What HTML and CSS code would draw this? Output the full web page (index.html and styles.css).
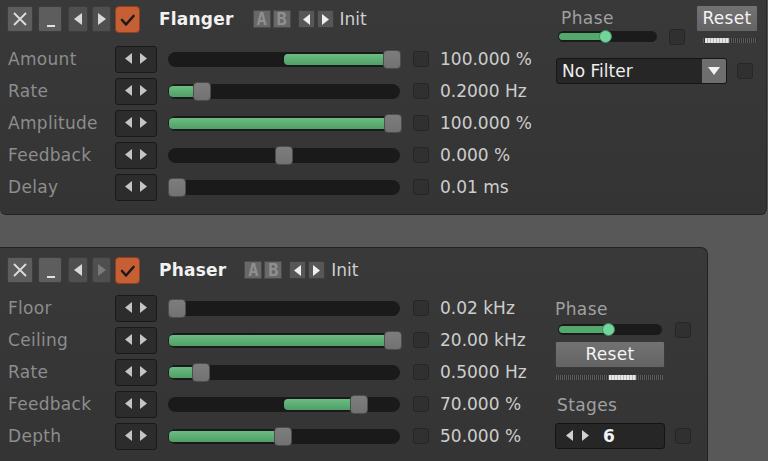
FILE: index.html
```html
<!DOCTYPE html>
<html>
<head>
<meta charset="utf-8">
<link rel="stylesheet" href="styles.css">
</head>
<body>
<div class="panel panel-top">
  <div class="main">
    <div class="header">
      <div class="hbtn hb-x"><svg width="26" height="26" viewBox="0 0 26 26"><path d="M6.5 6.5 L19.5 19.5 M19.5 6.5 L6.5 19.5"/></svg></div>
      <div class="hbtn hb-min"><span class="underscore"></span></div>
      <div class="hbtn hb-arr"><svg width="8" height="12" viewBox="0 0 8 12"><polygon points="8,0 8,12 0,6"/></svg></div>
      <div class="hbtn hb-arr"><svg width="8" height="12" viewBox="0 0 8 12"><polygon points="0,0 0,12 8,6"/></svg></div>
      <div class="hb-on"><svg width="25" height="27" viewBox="0 0 25 27"><polyline points="7,14 11,18.5 18.5,10"/></svg></div>
      <div class="title">Flanger</div>
      <div class="ab">A</div><div class="ab">B</div>
      <div class="sarr sarr-first"><svg width="7" height="11" viewBox="0 0 7 11"><polygon points="7,0 7,11 0,5.5"/></svg></div>
      <div class="sarr"><svg width="7" height="11" viewBox="0 0 7 11"><polygon points="0,0 0,11 7,5.5"/></svg></div>
      <div class="init">Init</div>
    </div>
    <div class="rows">
      <div class="row"><div class="label">Amount</div><div class="spin"><svg width="30" height="12" viewBox="0 0 30 12"><polygon points="11,0 11,11 4,5.5"/><polygon points="19,0 19,11 26,5.5"/></svg></div><div class="slider"><div class="fill" style="left:116px;width:106px"></div><div class="handle" style="left:215px"></div></div><div class="chk"></div><div class="value">100.000 %</div></div>
      <div class="row"><div class="label">Rate</div><div class="spin"><svg width="30" height="12" viewBox="0 0 30 12"><polygon points="11,0 11,11 4,5.5"/><polygon points="19,0 19,11 26,5.5"/></svg></div><div class="slider"><div class="fill" style="left:1px;width:28px"></div><div class="handle" style="left:25px"></div></div><div class="chk"></div><div class="value">0.2000 Hz</div></div>
      <div class="row"><div class="label">Amplitude</div><div class="spin"><svg width="30" height="12" viewBox="0 0 30 12"><polygon points="11,0 11,11 4,5.5"/><polygon points="19,0 19,11 26,5.5"/></svg></div><div class="slider"><div class="fill" style="left:1px;width:222px"></div><div class="handle" style="left:216px"></div></div><div class="chk"></div><div class="value">100.000 %</div></div>
      <div class="row"><div class="label">Feedback</div><div class="spin"><svg width="30" height="12" viewBox="0 0 30 12"><polygon points="11,0 11,11 4,5.5"/><polygon points="19,0 19,11 26,5.5"/></svg></div><div class="slider"><div class="handle" style="left:107px"></div></div><div class="chk"></div><div class="value">0.000 %</div></div>
      <div class="row"><div class="label">Delay</div><div class="spin"><svg width="30" height="12" viewBox="0 0 30 12"><polygon points="11,0 11,11 4,5.5"/><polygon points="19,0 19,11 26,5.5"/></svg></div><div class="slider"><div class="handle" style="left:0px"></div></div><div class="chk"></div><div class="value">0.01 ms</div></div>
    </div>
  </div>
  <div class="side side-top">
    <div class="phase-row">
      <div class="phase-block">
        <div class="side-label">Phase</div>
        <div class="mini-slider mini-top"><div class="mini-fill" style="width:47px"></div><div class="mini-handle" style="left:41px"></div></div>
      </div>
      <div class="chk chk-phase-top"></div>
      <div class="reset-block">
        <div class="reset reset-small">Reset</div>
        <div class="meter meter-top"><div class="ticks" style="width:2px"></div><div class="lit" style="width:24px"></div><div class="ticks" style="width:28px"></div></div>
      </div>
    </div>
    <div class="combo-row">
      <div class="combo"><span class="combo-text">No Filter</span><span class="combo-btn"><svg width="12" height="8" viewBox="0 0 12 8"><polygon points="0,0 12,0 6,8"/></svg></span></div>
      <div class="chk chk-combo"></div>
    </div>
  </div>
</div>

<div class="panel panel-bottom">
  <div class="main">
    <div class="header">
      <div class="hbtn hb-x"><svg width="26" height="26" viewBox="0 0 26 26"><path d="M6.5 6.5 L19.5 19.5 M19.5 6.5 L6.5 19.5"/></svg></div>
      <div class="hbtn hb-min"><span class="underscore"></span></div>
      <div class="hbtn hb-arr"><svg width="8" height="12" viewBox="0 0 8 12"><polygon points="8,0 8,12 0,6"/></svg></div>
      <div class="hbtn hb-arr hb-dim"><svg width="8" height="12" viewBox="0 0 8 12"><polygon points="0,0 0,12 8,6"/></svg></div>
      <div class="hb-on"><svg width="25" height="27" viewBox="0 0 25 27"><polyline points="7,14 11,18.5 18.5,10"/></svg></div>
      <div class="title">Phaser</div>
      <div class="ab">A</div><div class="ab">B</div>
      <div class="sarr sarr-first"><svg width="7" height="11" viewBox="0 0 7 11"><polygon points="7,0 7,11 0,5.5"/></svg></div>
      <div class="sarr"><svg width="7" height="11" viewBox="0 0 7 11"><polygon points="0,0 0,11 7,5.5"/></svg></div>
      <div class="init">Init</div>
    </div>
    <div class="rows">
      <div class="row"><div class="label">Floor</div><div class="spin"><svg width="30" height="12" viewBox="0 0 30 12"><polygon points="11,0 11,11 4,5.5"/><polygon points="19,0 19,11 26,5.5"/></svg></div><div class="slider"><div class="handle" style="left:0px"></div></div><div class="chk"></div><div class="value">0.02 kHz</div></div>
      <div class="row"><div class="label">Ceiling</div><div class="spin"><svg width="30" height="12" viewBox="0 0 30 12"><polygon points="11,0 11,11 4,5.5"/><polygon points="19,0 19,11 26,5.5"/></svg></div><div class="slider"><div class="fill" style="left:1px;width:222px"></div><div class="handle" style="left:216px"></div></div><div class="chk"></div><div class="value">20.00 kHz</div></div>
      <div class="row"><div class="label">Rate</div><div class="spin"><svg width="30" height="12" viewBox="0 0 30 12"><polygon points="11,0 11,11 4,5.5"/><polygon points="19,0 19,11 26,5.5"/></svg></div><div class="slider"><div class="fill" style="left:1px;width:27px"></div><div class="handle" style="left:24px"></div></div><div class="chk"></div><div class="value">0.5000 Hz</div></div>
      <div class="row"><div class="label">Feedback</div><div class="spin"><svg width="30" height="12" viewBox="0 0 30 12"><polygon points="11,0 11,11 4,5.5"/><polygon points="19,0 19,11 26,5.5"/></svg></div><div class="slider"><div class="fill" style="left:116px;width:72px"></div><div class="handle" style="left:182px"></div></div><div class="chk"></div><div class="value">70.000 %</div></div>
      <div class="row"><div class="label">Depth</div><div class="spin"><svg width="30" height="12" viewBox="0 0 30 12"><polygon points="11,0 11,11 4,5.5"/><polygon points="19,0 19,11 26,5.5"/></svg></div><div class="slider"><div class="fill" style="left:1px;width:110px"></div><div class="handle" style="left:106px"></div></div><div class="chk"></div><div class="value">50.000 %</div></div>
    </div>
  </div>
  <div class="side side-bottom">
    <div class="side-label">Phase</div>
    <div class="phase-line">
      <div class="mini-slider mini-bottom"><div class="mini-fill" style="width:49px"></div><div class="mini-handle" style="left:44px"></div></div>
      <div class="chk chk-phase-bottom"></div>
    </div>
    <div class="reset reset-wide">Reset</div>
    <div class="meter meter-bottom"><div class="ticks" style="width:53px"></div><div class="lit" style="width:27px"></div><div class="ticks" style="width:27px"></div></div>
    <div class="side-label stages-label">Stages</div>
    <div class="stages-row">
      <div class="stages-box"><svg width="26" height="12" viewBox="0 0 26 12"><polygon points="8,0 8,11 1,5.5"/><polygon points="17,0 17,11 24,5.5"/></svg><span class="stages-val">6</span></div>
      <div class="chk chk-stages"></div>
    </div>
  </div>
</div>
</body>
</html>
```

FILE: styles.css
```css
* { box-sizing: border-box; }
html, body { margin: 0; padding: 0; }
body {
  width: 768px;
  height: 461px;
  overflow: hidden;
  background: #585858;
  font-family: "DejaVu Sans", "Liberation Sans", sans-serif;
  font-size: 17px;
}
.panel {
  display: flex;
  background: linear-gradient(#393939, #343434);
}
.panel-top {
  width: 767px;
  height: 215px;
  border-bottom: 1px solid #222;
  border-right: 1px solid #2a2a2a;
  border-radius: 0 0 6px 6px;
}
.panel-bottom {
  margin-top: 32px;
  width: 708px;
  height: 214px;
  border-top: 1px solid #222;
  border-right: 1px solid #222;
  border-radius: 0 7px 0 0;
}
.main { width: 548px; flex: none; }
.header {
  display: flex;
  align-items: center;
  height: 26px;
  padding-left: 7px;
}
.panel-top .header { margin-top: 6px; }
.panel-bottom .header { margin-top: 9px; }
.hbtn {
  height: 26px;
  display: flex;
  align-items: center;
  justify-content: center;
  background: #595959;
  border: 1px solid #3e3e3e;
  border-radius: 2px;
  flex: none;
}
.hb-x { width: 26px; margin-right: 5px; background: #5d5d5d; }
.hb-x svg path { stroke: #dcdcdc; stroke-width: 2; fill: none; }
.hb-min { width: 24px; margin-right: 6px; position: relative; background: #5d5d5d; }
.underscore {
  position: absolute;
  left: 8px;
  bottom: 4px;
  width: 8px;
  height: 2px;
  background: #e0e0e0;
}
.hb-arr { width: 20px; margin-right: 4px; background: #4f4f4f; }
.hb-arr + .hb-arr { width: 19px; }
.hb-arr svg polygon { fill: #d8d8d8; }
.hb-dim svg polygon { fill: #7a7a7a; }
.hb-on {
  width: 25px;
  height: 27px;
  background: #c65f33;
  border: 1px solid #8e4020;
  border-radius: 4px;
  flex: none;
}
.hb-on svg { display: block; margin: -1px 0 0 -1px; }
.hb-on svg polyline { fill: none; stroke: #1d1a18; stroke-width: 2.6; stroke-linecap: round; stroke-linejoin: round; }
.title {
  margin-left: 19px;
  margin-right: 19px;
  font-weight: bold;
  color: #f2f2f2;
  line-height: 26px;
  letter-spacing: 0.2px;
}
.panel-bottom .title { margin-right: 18px; }
.ab {
  width: 18px;
  height: 18px;
  margin-right: 2px;
  background: #686868;
  border: 1px solid #4a4a4a;
  color: #8f8f8f;
  font-family: "DejaVu Sans Mono", monospace;
  font-weight: bold;
  font-size: 17px;
  line-height: 16px;
  text-align: center;
  overflow: hidden;
  flex: none;
}
.sarr {
  width: 17px;
  height: 18px;
  margin-left: 2px;
  background: #575757;
  border: 1px solid #3d3d3d;
  display: flex;
  align-items: center;
  justify-content: center;
  flex: none;
}
.sarr-first { margin-left: 5px; }
.sarr svg polygon { fill: #eeeeee; }
.init {
  margin-left: 6px;
  color: #cfcfcf;
  line-height: 26px;
}
.panel-top .rows { margin-top: 11px; }
.panel-bottom .rows { margin-top: 9px; }
.row {
  display: flex;
  align-items: center;
  height: 32px;
}
.label {
  width: 115px;
  padding-left: 8px;
  color: #8d8d8d;
  letter-spacing: 0.3px;
  flex: none;
  white-space: nowrap;
}
.spin {
  width: 42px;
  height: 27px;
  background: #2c2c2c;
  border: 1px solid #191919;
  border-radius: 3px;
  display: flex;
  align-items: center;
  justify-content: center;
  flex: none;
}
.spin svg polygon { fill: #c4c4c4; }
.slider {
  position: relative;
  width: 232px;
  height: 15px;
  margin-left: 11px;
  background: #1a1a1a;
  border-radius: 8px;
  flex: none;
}
.fill {
  position: absolute;
  top: 2px;
  bottom: 2px;
  background: linear-gradient(#6bbd82, #4f9f66);
  border-radius: 4px;
}
.handle {
  position: absolute;
  top: -2px;
  width: 18px;
  height: 19px;
  background: linear-gradient(#7d7d7d, #727272);
  border: 1px solid #4d4d4d;
  border-radius: 4px;
}
.chk {
  width: 16px;
  height: 16px;
  background: #303030;
  border: 1px solid #262626;
  border-radius: 3px;
  flex: none;
}
.row .chk { margin-left: 13px; }
.value {
  margin-left: 11px;
  color: #cdcdcd;
  white-space: nowrap;
}
.side { flex: none; }
.side-top { margin-left: 8px; padding-top: 5px; }
.side-bottom { margin-left: 7px; padding-top: 51px; }
.side-label {
  color: #a0a0a0;
  line-height: 20px;
  letter-spacing: 0.4px;
}
.phase-row { display: flex; align-items: flex-start; }
.phase-block { width: 113px; }
.phase-block .side-label { margin-top: 3px; padding-left: 5px; }
.mini-slider {
  position: relative;
  height: 11px;
  background: #1b1b1b;
  border-radius: 6px;
}
.mini-top { width: 99px; margin-left: 2px; margin-top: 3px; }
.mini-bottom { width: 104px; margin-left: 3px; }
.mini-fill {
  position: absolute;
  left: 1px;
  top: 2px;
  bottom: 2px;
  background: #52a96b;
  border-radius: 4px;
}
.mini-handle {
  position: absolute;
  top: -1px;
  width: 13px;
  height: 13px;
  border-radius: 50%;
  background: #72d49b;
  border: 1px solid #3f8a5c;
}
.chk-phase-top { margin-top: 24px; }
.reset-block { margin-left: 11px; }
.reset {
  background: linear-gradient(#727272, #646464);
  border: 1px solid #3a3a3a;
  border-radius: 2px;
  color: #f4f4f4;
  text-align: center;
  height: 27px;
  line-height: 25px;
  letter-spacing: 0.3px;
}
.reset-small { width: 62px; }
.meter {
  display: flex;
  height: 5px;
}
.meter-top { margin-top: 6px; margin-left: 7px; }
.ticks {
  height: 5px;
  background: repeating-linear-gradient(to right, #5c5c5c 0 1px, #2e2e2e 1px 2px);
}
.lit {
  height: 5px;
  background: repeating-linear-gradient(to right, #e6e6e6 0 2px, #b8b8b8 2px 3px);
}
.combo-row { display: flex; align-items: center; margin-top: 13px; }
.combo {
  width: 171px;
  height: 26px;
  display: flex;
  background: #262626;
  border: 1px solid #161616;
  border-radius: 3px;
  overflow: hidden;
}
.combo-text {
  flex: 1;
  color: #eeeeee;
  padding-left: 5px;
  line-height: 24px;
}
.combo-btn {
  width: 24px;
  background: #6e6e6e;
  display: flex;
  align-items: center;
  justify-content: center;
}
.combo-btn svg polygon { fill: #f2f2f2; }
.chk-combo { margin-left: 10px; }
.phase-line { display: flex; align-items: center; margin-top: 5px; height: 11px; }
.chk-phase-bottom { margin-left: 13px; }
.reset-wide { width: 110px; margin-top: 6px; }
.meter-bottom { margin-top: 7px; margin-left: 1px; }
.stages-label { margin-top: 15px; padding-left: 2px; }
.stages-row { display: flex; align-items: center; margin-top: 8px; }
.stages-box {
  width: 110px;
  height: 26px;
  display: flex;
  align-items: center;
  padding-left: 9px;
  background: #262626;
  border: 1px solid #141414;
  border-radius: 3px;
}
.stages-box svg polygon { fill: #d0d0d0; }
.stages-val {
  margin-left: 12px;
  color: #f2f2f2;
  font-weight: bold;
}
.chk-stages { margin-left: 10px; }
```
